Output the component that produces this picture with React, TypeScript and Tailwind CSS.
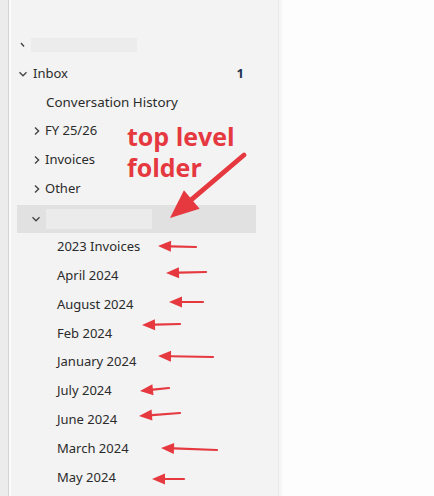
import React from 'react';

const font = { fontFamily: '"Noto Sans", "Open Sans", sans-serif' };

const subfolders = [
  '2023 Invoices',
  'April 2024',
  'August 2024',
  'Feb 2024',
  'January 2024',
  'July 2024',
  'June 2024',
  'March 2024',
  'May 2024',
];

// small red arrows pointing at each subfolder: [headX, headY, tailX, tailY]
const arrows: [number, number, number, number][] = [
  [158, 246, 196, 247],
  [166, 273, 206, 272],
  [169, 302, 203, 302],
  [142, 325, 180, 324],
  [158, 356, 213, 357],
  [140, 391, 169, 388],
  [139, 416, 180, 413],
  [161, 448, 217, 450],
  [152, 479, 184, 479],
];

const Down = () => (
  <svg width="10" height="10" viewBox="0 0 10 10" className="shrink-0">
    <path d="M1.5 3.2 L5 6.8 L8.5 3.2" fill="none" stroke="#444" strokeWidth="1.3" />
  </svg>
);

const Right = () => (
  <svg width="8" height="10" viewBox="0 0 8 10" className="shrink-0">
    <path d="M2 1.5 L5.6 5 L2 8.5" fill="none" stroke="#444" strokeWidth="1.4" />
  </svg>
);

const Arrow = ({ hx, hy, tx, ty, size = 9 }: { hx: number; hy: number; tx: number; ty: number; size?: number }) => {
  const a = Math.atan2(hy - ty, hx - tx);
  const bx = hx - Math.cos(a) * size * 1.3;
  const by = hy - Math.sin(a) * size * 1.3;
  const px = -Math.sin(a) * size * 0.55;
  const py = Math.cos(a) * size * 0.55;
  return (
    <g>
      <line x1={tx} y1={ty} x2={bx} y2={by} stroke="#e5383f" strokeWidth={size / 4.5} strokeLinecap="round" />
      <polygon points={`${hx},${hy} ${bx + px},${by + py} ${bx - px},${by - py}`} fill="#e5383f" />
    </g>
  );
};

export default function App() {
  return (
    <div className="relative flex h-[496px] w-[434px] overflow-hidden bg-[#fdfdfd] text-[13px] text-[#2b2b2b]" style={font}>
      {/* left edge strip */}
      <div className="w-[8px] bg-[#ececec]" />
      <div className="w-px bg-[#d4d4d4]" />
      <div className="w-[2px] bg-[#fafafa]" />

      {/* folder pane */}
      <div className="flex w-[267px] flex-col bg-[#f3f3f3] pt-[31px]">
        {/* account row (redacted) */}
        <div className="flex h-[28px] shrink-0 items-center pl-[8px]">
          <svg width="10" height="10" viewBox="0 0 10 10" className="shrink-0">
            <path d="M2 3 L5 6.5" fill="none" stroke="#444" strokeWidth="1.4" />
          </svg>
          <div className="ml-[2px] h-[14px] w-[106px] bg-[#ececec]" />
        </div>

        {/* inbox */}
        <div className="flex h-[29px] shrink-0 items-center pl-[7px] pr-[34px]">
          <Down />
          <span className="ml-[5px]">Inbox</span>
          <span className="ml-auto font-bold text-[#1f3350]">1</span>
        </div>

        <div className="flex h-[28.5px] shrink-0 items-center pl-[35px] text-[13.4px]">Conversation History</div>

        <div className="flex h-[29px] shrink-0 items-center gap-[4px] pl-[22px]">
          <Right />
          <span>FY 25/26</span>
        </div>
        <div className="flex h-[29px] shrink-0 items-center gap-[4px] pl-[22px]">
          <Right />
          <span>Invoices</span>
        </div>
        <div className="flex h-[29px] shrink-0 items-center gap-[4px] pl-[22px]">
          <Right />
          <span>Other</span>
        </div>

        {/* selected top level folder (redacted) */}
        <div className="mr-[22px] ml-[6px] mt-[1px] flex h-[28px] shrink-0 items-center bg-[#e1e1e1] pl-[14px]">
          <Down />
          <div className="ml-[5px] h-[20px] w-[106px] bg-[#ebebeb]" />
        </div>

        {/* subfolders */}
        <div className="flex shrink-0 flex-col pt-[0px]">
          {subfolders.map((name) => (
            <div key={name} className="flex h-[28.8px] shrink-0 items-center pl-[46px]">
              {name}
            </div>
          ))}
          <div className="flex h-[10px] shrink-0 items-end pl-[48px]">
            <div className="h-[3px] w-[30px] bg-[#e2e2e2]" />
          </div>
        </div>
      </div>

      {/* divider shadow */}
      <div className="w-px bg-[#e8e8e8]" />
      <div className="w-[3px] bg-[#f6f6f6]" />
      <div className="flex-1 bg-[#fdfdfd]" />

      {/* annotation overlay */}
      <div className="pointer-events-none absolute left-[127px] top-[121px] text-[25px] font-bold leading-[31px] text-[#e5383f]" style={{ fontFamily: '"Open Sans", "Noto Sans", sans-serif' }}>
        <div>top level</div>
        <div>folder</div>
      </div>
      <svg className="pointer-events-none absolute left-0 top-0" width="434" height="496">
        <Arrow hx={170} hy={218} tx={244} ty={155} size={22} />
        {arrows.map(([hx, hy, tx, ty], i) => (
          <Arrow key={i} hx={hx} hy={hy} tx={tx} ty={ty} size={10} />
        ))}
      </svg>
    </div>
  );
}
